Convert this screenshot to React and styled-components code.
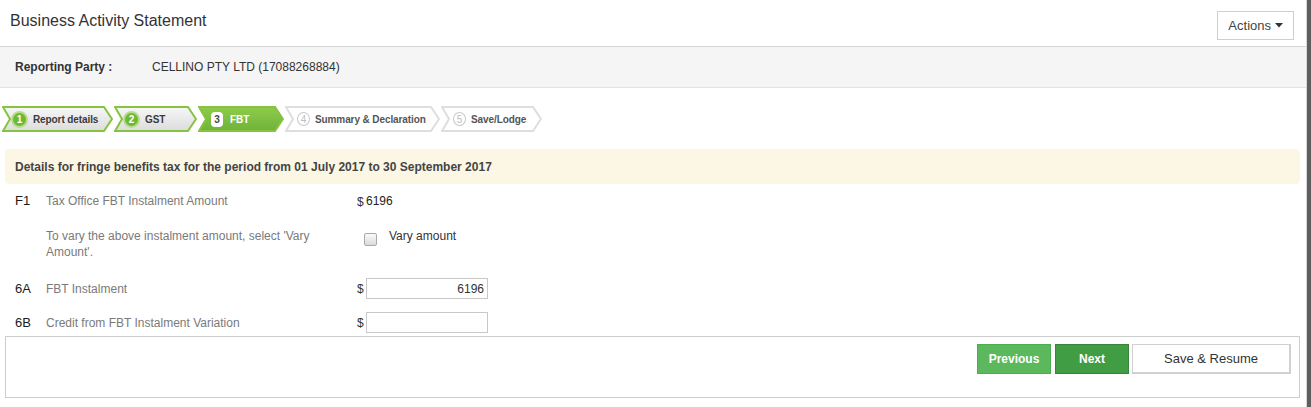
import React from 'react'
import styled, { createGlobalStyle } from 'styled-components'

const GlobalStyle = createGlobalStyle`
  html, body {
    margin: 0;
    padding: 0;
    background: #fff;
    font-family: "Liberation Sans", Arial, sans-serif;
    color: #333;
  }
`

const steps = [
  { n: 1, label: 'Report details', width: 111, state: 'done' },
  { n: 2, label: 'GST', width: 83, state: 'done' },
  { n: 3, label: 'FBT', width: 86, state: 'active' },
  { n: 4, label: 'Summary & Declaration', width: 155, state: 'todo' },
  { n: 5, label: 'Save/Lodge', width: 101, state: 'todo' }
]

const rows = [
  { code: 'F1', label: 'Tax Office FBT Instalment Amount', kind: 'text', value: '6196' },
  { code: '', label: "To vary the above instalment amount, select 'Vary Amount'.", kind: 'check' },
  { code: '6A', label: 'FBT Instalment', kind: 'input', value: '6196' },
  { code: '6B', label: 'Credit from FBT Instalment Variation', kind: 'input', value: '' }
]

const Chevron = ({ width, state }) => {
  const h = 26
  const d = 8
  const fill = state === 'done' ? 'url(#gDone)' : state === 'active' ? 'url(#gActive)' : '#fff'
  const stroke = state === 'todo' ? '#dedede' : '#86c440'
  return (
    <ChevronSvg width={width} height={h} viewBox={`0 0 ${width} ${h}`}>
      <defs>
        <linearGradient id="gDone" x1="0" y1="0" x2="0" y2="1">
          <stop offset="0" stopColor="#f7f7f7" />
          <stop offset="1" stopColor="#dcdcdc" />
        </linearGradient>
        <linearGradient id="gActive" x1="0" y1="0" x2="0" y2="1">
          <stop offset="0" stopColor="#8fcb4a" />
          <stop offset="1" stopColor="#6eb33a" />
        </linearGradient>
      </defs>
      <polygon
        points={`1,1 ${width - d - 1},1 ${width - 1},${h / 2} ${width - d - 1},${h - 1} 1,${h - 1} ${d},${h / 2}`}
        fill={fill}
        stroke={stroke}
        strokeWidth="2"
        strokeLinejoin="miter"
      />
    </ChevronSvg>
  )
}

const Caret = () => (
  <svg width="8" height="5" viewBox="0 0 8 5">
    <polygon points="0,0 8,0 4,4.5" fill="#333" />
  </svg>
)

const App = () => (
  <Page>
    <GlobalStyle />
    <Main>
      <Header>
        <Title>Business Activity Statement</Title>
        <ActionsButton>
          Actions <Caret />
        </ActionsButton>
      </Header>

      <PartyBar>
        <PartyLabel>Reporting Party :</PartyLabel>
        <span>CELLINO PTY LTD (17088268884)</span>
      </PartyBar>

      <Steps>
        {steps.map(s => (
          <Step key={s.n} style={{ width: s.width }} $state={s.state}>
            <Chevron width={s.width} state={s.state} />
            <StepNum $state={s.state}>{s.n}</StepNum>
            <StepLabel $state={s.state}>{s.label}</StepLabel>
          </Step>
        ))}
      </Steps>

      <Banner>Details for fringe benefits tax for the period from 01 July 2017 to 30 September 2017</Banner>

      <Rows>
        {rows.map((r, i) => (
          <Row key={i} $kind={r.kind}>
            <Code>{r.code}</Code>
            <Label>{r.label}</Label>
            <Value>
              {r.kind === 'text' && (
                <>
                  <Dollar $low>$</Dollar>
                  <Amount>{r.value}</Amount>
                </>
              )}
              {r.kind === 'check' && (
                <CheckWrap>
                  <Checkbox />
                  <span>Vary amount</span>
                </CheckWrap>
              )}
              {r.kind === 'input' && (
                <>
                  <Dollar>$</Dollar>
                  <AmountInput defaultValue={r.value} />
                </>
              )}
            </Value>
          </Row>
        ))}
      </Rows>

      <Footer>
        <GreenButton>Previous</GreenButton>
        <GreenButton $dark>Next</GreenButton>
        <PlainButton>Save &amp; Resume</PlainButton>
      </Footer>
    </Main>
    <ScrollEdge />
  </Page>
)

const Page = styled.div`
  display: flex;
  height: 407px;
  overflow: hidden;
`

const Main = styled.div`
  position: relative;
  flex: 1;
  display: flex;
  flex-direction: column;
  border-right: 1px solid #d8d8d8;
`

const ScrollEdge = styled.div`
  width: 4px;
  background: #5e5e5e;
`

const Header = styled.div`
  display: flex;
  justify-content: space-between;
  align-items: flex-start;
  height: 47px;
  box-sizing: border-box;
  padding: 10px 12px 0 10px;
  border-bottom: 1px solid #d4d4d4;
`

const Title = styled.h1`
  margin: 2px 0 0;
  font-size: 16px;
  font-weight: normal;
  color: #333;
`

const ActionsButton = styled.button`
  display: flex;
  align-items: center;
  gap: 4px;
  height: 29px;
  margin-top: 1px;
  padding: 0 10px 0 10px;
  border: 1px solid #cfcfcf;
  background: #fff;
  font-family: inherit;
  font-size: 13px;
  color: #444;
`

const PartyBar = styled.div`
  display: flex;
  align-items: center;
  height: 40px;
  padding-left: 15px;
  background: #f5f5f5;
  border-bottom: 1px solid #e2e2e2;
  font-size: 12px;
  color: #333;
`

const PartyLabel = styled.span`
  width: 137px;
  font-weight: bold;
`

const Steps = styled.div`
  display: flex;
  margin: 18px 0 0 2px;
  height: 26px;
`

const Step = styled.div`
  position: relative;
  display: flex;
  align-items: center;
  box-sizing: border-box;
  padding-left: ${p => (p.$state === 'done' ? 9 : p.$state === 'active' ? 13 : 12)}px;
  height: 26px;
  margin-right: 1px;
`

const ChevronSvg = styled.svg`
  position: absolute;
  left: 0;
  top: 0;
`

const StepNum = styled.span`
  position: relative;
  display: flex;
  align-items: center;
  justify-content: center;
  box-sizing: border-box;
  font-size: 10px;
  font-weight: bold;
  margin-right: 5px;
  ${p =>
    p.$state === 'done'
      ? `
    width: 17px; height: 17px; border-radius: 50%;
    background: #6fb833; color: #fff;
    border: 2px solid #b7dc8e;
  `
      : p.$state === 'active'
      ? `
    width: 12px; height: 15px; border-radius: 4px;
    background: #fff; color: #4a4a4a; margin-right: 7px;
  `
      : `
    width: 13px; height: 14px; border-radius: 50%;
    border: 1.5px solid #c9c9c9; color: #bdbdbd; font-weight: normal;
  `}
`

const StepLabel = styled.span`
  position: relative;
  font-size: 10px;
  font-weight: bold;
  letter-spacing: -0.1px;
  color: ${p => (p.$state === 'active' ? '#fff' : p.$state === 'done' ? '#3a3a3a' : '#555')};
`

const Banner = styled.div`
  margin: 17px 6px 0 5px;
  height: 35px;
  display: flex;
  align-items: center;
  padding-left: 10px;
  background: #fcf7e4;
  border-radius: 4px;
  font-size: 12px;
  font-weight: bold;
  color: #444;
`

const Rows = styled.div`
  display: flex;
  flex-direction: column;
  padding: 9px 0 0 15px;
`

const Row = styled.div`
  display: grid;
  grid-template-columns: 31px 311px auto;
  align-items: ${p => (p.$kind === 'input' ? 'center' : 'start')};
  margin-bottom: ${p => (p.$kind === 'text' ? 19 : p.$kind === 'check' ? 18 : 13)}px;
  font-size: 12px;
  line-height: 16px;
`

const Code = styled.span`
  font-size: 13px;
  color: #1a1a1a;
`

const Label = styled.span`
  color: #7a7a7a;
  padding-right: 20px;
`

const Value = styled.div`
  display: flex;
  align-items: center;
`

const Dollar = styled.span`
  width: 9px;
  color: #333;
  ${p => p.$low && 'position: relative; top: 1px;'}
`

const Amount = styled.span`
  color: #222;
`

const CheckWrap = styled.label`
  display: flex;
  align-items: flex-start;
  gap: 12px;
  padding-left: 7px;
  color: #333;
`

const Checkbox = styled.span`
  display: block;
  width: 11px;
  height: 11px;
  margin-top: 5px;
  border: 1px solid #a9a9a9;
  border-radius: 2px;
  background: linear-gradient(#fafafa, #dadada);
`

const AmountInput = styled.input`
  box-sizing: border-box;
  width: 122px;
  height: 21px;
  border: 1px solid #c8c8c8;
  padding: 0 3px;
  text-align: right;
  font-family: inherit;
  font-size: 12px;
  color: #333;
  outline: none;
`

const Footer = styled.div`
  position: absolute;
  left: 5px;
  right: 6px;
  bottom: 9px;
  height: 62px;
  box-sizing: border-box;
  display: flex;
  justify-content: flex-end;
  align-items: flex-start;
  gap: 4px;
  padding: 7px 8px 0 0;
  background: #fff;
  border: 1px solid #cdcdcd;
`

const GreenButton = styled.button`
  width: 74px;
  height: 30px;
  border: 1px solid ${p => (p.$dark ? '#398439' : '#4cae4c')};
  background: ${p => (p.$dark ? '#419d43' : '#5cb85c')};
  color: #fff;
  font-family: inherit;
  font-size: 12px;
  font-weight: bold;
  margin-right: ${p => (p.$dark ? -1 : 0)}px;
`

const PlainButton = styled.button`
  width: 159px;
  height: 30px;
  border: 1px solid #d0d0d0;
  border-right-width: 2px;
  border-bottom-width: 2px;
  background: #fff;
  color: #333;
  font-family: inherit;
  font-size: 13px;
`

export default App
